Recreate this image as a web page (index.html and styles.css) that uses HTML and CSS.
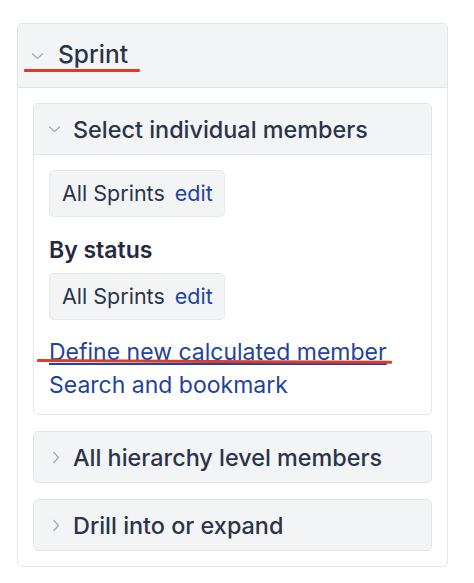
FILE: index.html
```html
<!DOCTYPE html>
<html lang="en">
<head>
  <meta charset="UTF-8" />
  <title>Sprint</title>
  <link rel="stylesheet" href="styles.css">
</head>
<body>
  <div class="panel">
    <div class="panel-head">
      <svg class="chev" width="13" height="8" viewBox="0 0 13 8"><path d="M1 1.5 L6.5 6.5 L12 1.5" fill="none" stroke="#a3a7ae" stroke-width="1.2"/></svg>
      <span class="panel-title">Sprint</span>
      <span class="mark mark-sprint"></span>
    </div>
    <div class="panel-body">
      <div class="section">
        <div class="section-head">
          <svg class="chev" width="13" height="8" viewBox="0 0 13 8"><path d="M1 1.5 L6.5 6.5 L12 1.5" fill="none" stroke="#a3a7ae" stroke-width="1.2"/></svg>
          <span>Select individual members</span>
        </div>
        <div class="section-body">
          <div class="chip">All Sprints <a href="#">edit</a></div>
          <div class="sub-label">By status</div>
          <div class="chip">All Sprints <a href="#">edit</a></div>
          <div class="links">
            <a href="#" class="define">Define new calculated member</a>
            <a href="#">Search and bookmark</a>
            <span class="mark mark-define"></span>
          </div>
        </div>
      </div>
      <div class="section closed">
        <div class="section-head">
          <svg class="chev" width="8" height="13" viewBox="0 0 8 13"><path d="M1.5 1 L6.5 6.5 L1.5 12" fill="none" stroke="#a3a7ae" stroke-width="1.2"/></svg>
          <span>All hierarchy level members</span>
        </div>
      </div>
      <div class="section closed">
        <div class="section-head">
          <svg class="chev" width="8" height="13" viewBox="0 0 8 13"><path d="M1.5 1 L6.5 6.5 L1.5 12" fill="none" stroke="#a3a7ae" stroke-width="1.2"/></svg>
          <span>Drill into or expand</span>
        </div>
      </div>
    </div>
  </div>
</body>
</html>
```

FILE: styles.css
```css
body {
  margin: 0;
  background: #ffffff;
  font-family: 'Inter', 'Liberation Sans', sans-serif;
  color: #2b3449;
}
a {
  color: #1f43a0;
  text-decoration: none;
}
.panel {
  margin: 23px 0 0 17px;
  width: 431px;
  box-sizing: border-box;
  border: 1px solid #e3e5e9;
  border-radius: 5px;
  overflow: hidden;
}
.panel-head {
  position: relative;
  height: 63px;
  background: #f3f4f6;
  border-bottom: 1px solid #e3e5e9;
  display: flex;
  align-items: center;
  padding-left: 13px;
  gap: 14px;
}
.panel-title {
  font-size: 24.5px;
  font-weight: 500;
  margin-top: -4px;
}
.panel-body {
  padding: 15px;
  display: flex;
  flex-direction: column;
  gap: 16px;
}
.section {
  border: 1px solid #e3e5e9;
  border-radius: 5px;
  overflow: hidden;
}
.section-head {
  height: 50px;
  background: #f3f4f6;
  border-bottom: 1px solid #e3e5e9;
  display: flex;
  align-items: center;
  padding-left: 14px;
  gap: 12px;
  font-size: 23.4px;
  font-weight: 500;
}
.section.closed .section-head {
  border-bottom: none;
  padding-left: 18px;
  gap: 13px;
}
.section-body {
  padding: 15px 15px 12px;
}
.chip {
  display: inline-block;
  background: #f3f4f6;
  border: 1px solid #e6e8eb;
  border-radius: 5px;
  padding: 0 11px 0 12px;
  line-height: 45px;
  font-size: 21.5px;
}
.chip a {
  margin-left: 4px;
}
.sub-label {
  font-size: 23px;
  font-weight: 600;
  margin: 19px 0 9px;
  line-height: 28px;
  color: #222a3c;
}
.links {
  position: relative;
  margin-top: 16px;
  display: flex;
  flex-direction: column;
  font-size: 23px;
  line-height: 33px;
}
.links a {
  align-self: flex-start;
}
.define {
  text-decoration: underline;
  text-decoration-thickness: 2px;
  text-underline-offset: 3px;
}
.mark {
  position: absolute;
  height: 3px;
  background: #df3b25;
  border-radius: 1px;
}
.mark-sprint {
  left: 6px;
  top: 45px;
  width: 116px;
}
.mark-define {
  left: -12px;
  top: 23px;
  width: 355px;
  transform: rotate(0.3deg);
  transform-origin: left center;
}
```
